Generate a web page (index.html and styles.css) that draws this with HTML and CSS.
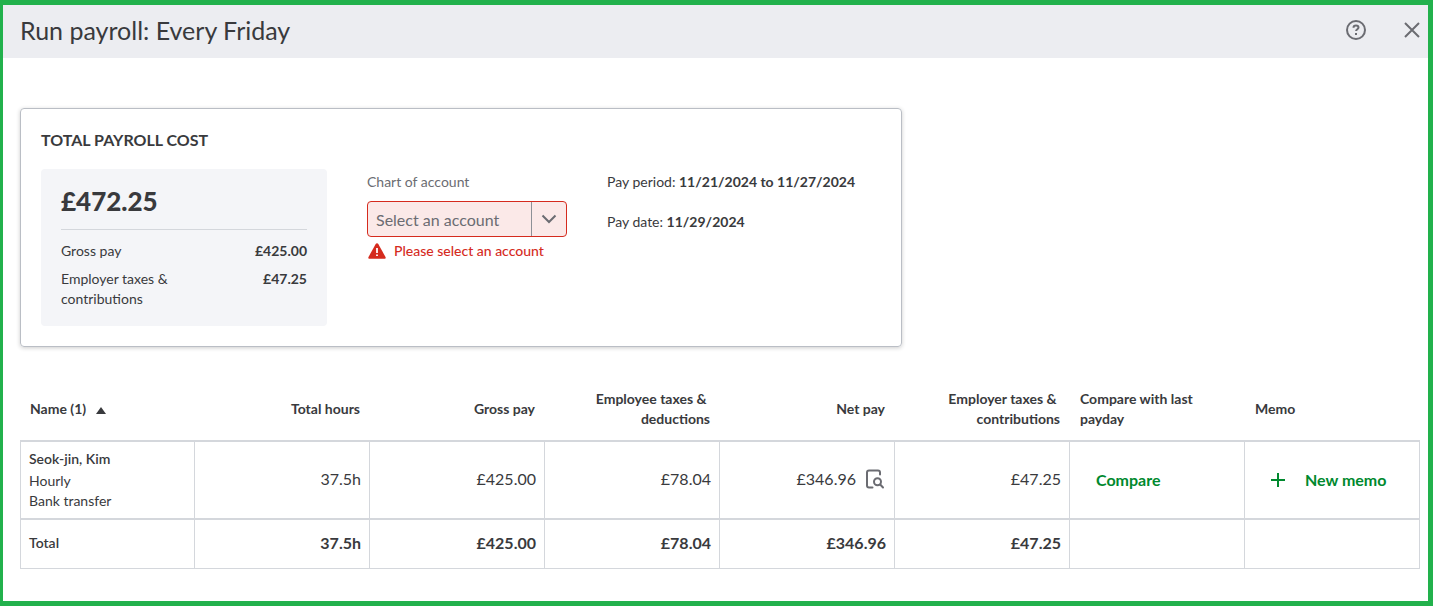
FILE: index.html
```html
<!DOCTYPE html>
<html lang="en">
<head>
    <meta charset="UTF-8">
    <meta name="viewport" content="width=device-width, initial-scale=1.0">
    <title>Run payroll: Every Friday</title>
    <link rel="stylesheet" href="styles.css">
</head>
<body>
    <div class="page">
        <header class="top-bar">
            <h1>Run payroll: Every Friday</h1>
            <div class="top-actions">
                <button type="button" class="icon-button" aria-label="Help">
                    <svg width="24" height="24" viewBox="0 0 24 24" fill="none" stroke="currentColor" stroke-width="2">
                        <circle cx="12" cy="12" r="9"/>
                        <path d="M9.500 9.800c0-1.400 1-2.200 2.500-2.200s2.500.8 2.500 2c0 1.600-2.400 1.700-2.400 3.500"/>
                        <path d="M11 15h2v2h-2z" fill="currentColor" stroke="none"/>
                    </svg>
                </button>
                <button type="button" class="icon-button" aria-label="Close">
                    <svg width="24" height="24" viewBox="0 0 24 24" fill="none" stroke="currentColor" stroke-width="2">
                        <path d="M5 5l14 14M19 5L5 19"/>
                    </svg>
                </button>
            </div>
        </header>

        <main>
            <!-- Cost summary -->
            <section class="cost-card">
                <h2>TOTAL PAYROLL COST</h2>
                <div class="cost-columns">
                    <div class="cost-box">
                        <div class="cost-total">£472.25</div>
                        <dl>
                            <div class="cost-row">
                                <dt>Gross pay</dt>
                                <dd>£425.00</dd>
                            </div>
                            <div class="cost-row">
                                <dt>Employer taxes &amp; contributions</dt>
                                <dd>£47.25</dd>
                            </div>
                        </dl>
                    </div>

                    <div class="account">
                        <label for="account">Chart of account</label>
                        <div class="select-wrap">
                            <select id="account" aria-describedby="accountError">
                                <option>Select an account</option>
                            </select>
                            <span class="select-arrow">
                                <svg width="16" height="10" viewBox="0 0 16 10" fill="none" stroke="currentColor" stroke-width="2">
                                    <path d="M1.500 1.500L8 8l6.500-6.500"/>
                                </svg>
                            </span>
                        </div>
                        <p class="error" id="accountError">
                            <svg width="18" height="16" viewBox="0 0 18 16">
                                <path d="M9 .3c.6 0 1 .3 1.300.8l7.200 12.900c.5.900 0 1.800-1 1.800H1.500c-1 0-1.500-.9-1-1.800L7.700 1.100C8 .6 8.400.3 9 .3z" fill="#d52b1e"/>
                                <path d="M8 5h2v5H8zM8 11.500h2V13H8z" fill="#fbe9e8"/>
                            </svg>
                            Please select an account
                        </p>
                    </div>

                    <div class="dates">
                        <p>Pay period: <strong>11/21/2024 to 11/27/2024</strong></p>
                        <p>Pay date: <strong>11/29/2024</strong></p>
                    </div>
                </div>
            </section>

            <!-- Employees -->
            <table class="payroll">
                <thead>
                    <tr>
                        <th scope="col" class="left" aria-sort="ascending">
                            Name (1)
                            <svg class="sort" width="10" height="7" viewBox="0 0 10 7"><path d="M5 0l5 7H0z" fill="currentColor"/></svg>
                        </th>
                        <th scope="col">Total hours</th>
                        <th scope="col">Gross pay</th>
                        <th scope="col">Employee taxes &amp;&nbsp;<br>deductions</th>
                        <th scope="col">Net pay</th>
                        <th scope="col">Employer taxes &amp;&nbsp;<br>contributions</th>
                        <th scope="col" class="left">Compare with last payday</th>
                        <th scope="col" class="left">Memo</th>
                    </tr>
                </thead>
                <tbody>
                    <tr>
                        <td class="name">
                            <strong>Seok-jin, Kim</strong>
                            <span>Hourly</span>
                            <span>Bank transfer</span>
                        </td>
                        <td>37.5h</td>
                        <td>£425.00</td>
                        <td>£78.04</td>
                        <td>
                            <div class="net-pay">
                                £346.96
                                <button type="button" class="icon-button" aria-label="View payslip">
                                    <svg width="20" height="20" viewBox="0 0 20 20" fill="none" stroke="currentColor" stroke-width="2" stroke-linecap="round">
                                        <path d="M14 5.500v-2c0-1.200-.8-2-2-2H3c-1.200 0-2 .8-2 2v13c0 1.200.8 2 2 2h3.500"/>
                                        <circle cx="11.500" cy="12.800" r="3.500"/>
                                        <path d="M14.200 15.500l2.800 3"/>
                                    </svg>
                                </button>
                            </div>
                        </td>
                        <td>£47.25</td>
                        <td class="action"><button type="button" class="link-button">Compare</button></td>
                        <td class="action">
                            <button type="button" class="link-button">
                                <svg width="14" height="14" viewBox="0 0 14 14" fill="none" stroke="currentColor" stroke-width="2"><path d="M7 0v14M0 7h14"/></svg>
                                New memo
                            </button>
                        </td>
                    </tr>
                </tbody>
                <tfoot>
                    <tr>
                        <th scope="row" class="total">Total</th>
                        <td>37.5h</td>
                        <td>£425.00</td>
                        <td>£78.04</td>
                        <td>£346.96</td>
                        <td>£47.25</td>
                        <td></td>
                        <td></td>
                    </tr>
                </tfoot>
            </table>
        </main>
    </div>
</body>
</html>
```
FILE: styles.css
```css
* {
    box-sizing: border-box;
}

body {
    margin: 0;
    padding: 0 1px 1px 0;
    min-height: 100vh;
    display: flex;
    background-color: #fff;
    color: #393a3d;
    font-family: Lato, "Liberation Sans", sans-serif;
    font-size: 14px;
    line-height: 20px;
}

h1, h2, p, dl, dd {
    margin: 0;
}

button {
    padding: 0;
    border: none;
    background: none;
    font-family: inherit;
    cursor: pointer;
}

svg {
    display: block;
    flex-shrink: 0;
}

.page {
    flex: 1;
    border: 5px solid #22b14c;
    border-left-width: 3px;
}

.top-bar {
    display: flex;
    justify-content: space-between;
    align-items: center;
    height: 53px;
    padding: 0 4px 4px 17px;
    background-color: #ecedf1;
}

h1 {
    font-size: 25px;
    font-weight: 400;
    line-height: 30px;
}

.top-actions {
    display: flex;
    gap: 32px;
}

.icon-button {
    color: #6b6c72;
}

main {
    padding: 50px 8px 24px 17px;
}

.cost-card {
    width: 63%;
    padding: 20px;
    border: 1px solid #babec5;
    border-radius: 4px;
    box-shadow: 0 1px 4px rgba(0, 0, 0, 0.2);
}

h2 {
    margin-bottom: 18px;
    font-size: 16px;
    font-weight: 700;
    line-height: 22px;
}

.cost-columns {
    display: flex;
    align-items: flex-start;
    gap: 40px;
}

.cost-box {
    width: 286px;
    padding: 16px 20px 17px;
    border-radius: 4px;
    background-color: #f4f5f8;
}

.cost-total {
    margin-bottom: 11px;
    padding-bottom: 12px;
    border-bottom: 1px solid #d4d7dc;
    font-size: 26px;
    font-weight: 900;
    line-height: 32px;
}

.cost-row {
    display: flex;
    justify-content: space-between;
}

.cost-row + .cost-row {
    margin-top: 8px;
}

.cost-row dt {
    width: 128px;
}

.cost-row dd {
    font-weight: 700;
}

.account {
    width: 200px;
    padding-top: 3px;
}

.account label {
    display: block;
    margin-bottom: 9px;
    color: #6b6c72;
}

.select-wrap {
    position: relative;
}

select {
    display: block;
    width: 100%;
    height: 36px;
    padding: 0 40px 0 8px;
    appearance: none;
    border: 1px solid #d52b1e;
    border-radius: 4px;
    background-color: #fbe9e8;
    color: #6b6c72;
    font-family: inherit;
    font-size: 16px;
}

/* sits on top of the select */
.select-arrow {
    position: absolute;
    top: 1px;
    right: 1px;
    bottom: 1px;
    width: 35px;
    display: flex;
    justify-content: center;
    align-items: center;
    border-left: 1px solid #8d9096;
    color: #6b6c72;
    pointer-events: none;
}

.error {
    display: flex;
    align-items: center;
    gap: 8px;
    margin-top: 4px;
    padding-left: 1px;
    color: #d52b1e;
    font-weight: 500;
}

.dates {
    padding-top: 3px;
}

.dates p + p {
    margin-top: 20px;
}

.payroll {
    width: 100%;
    margin-top: 31px;
    table-layout: fixed;
    border-spacing: 0;
    text-align: right;
}

.payroll thead th {
    height: 64px;
    padding: 0 10px;
    border-bottom: 2px solid #d4d7dc;
    font-weight: 700;
    text-align: right;
}

.payroll thead .left {
    text-align: left;
}

.sort {
    display: inline-block;
    margin-left: 6px;
}

.payroll td,
.total {
    padding: 0 8px 2px;
    border-right: 1px solid #d4d7dc;
    font-size: 16px;
}

.payroll tbody td {
    height: 78px;
    border-bottom: 2px solid #d4d7dc;
}

.payroll tfoot td,
.total {
    height: 49px;
    border-bottom: 1px solid #d4d7dc;
    font-weight: 700;
}

.payroll .name,
.payroll .total {
    border-left: 1px solid #d4d7dc;
    font-size: 14px;
    text-align: left;
}

.payroll .total {
    font-weight: 600;
}

.payroll .name {
    padding-bottom: 0;
}

.name strong,
.name span {
    display: block;
}

.name strong {
    margin-bottom: 2px;
    font-weight: 600;
}

.net-pay {
    display: flex;
    justify-content: flex-end;
    align-items: center;
    gap: 10px;
}

.payroll .action {
    padding: 0 0 0 26px;
    text-align: left;
}

.link-button {
    display: flex;
    align-items: center;
    gap: 20px;
    color: #00892e;
    font-size: 16px;
    font-weight: 700;
    line-height: 20px;
}
```
